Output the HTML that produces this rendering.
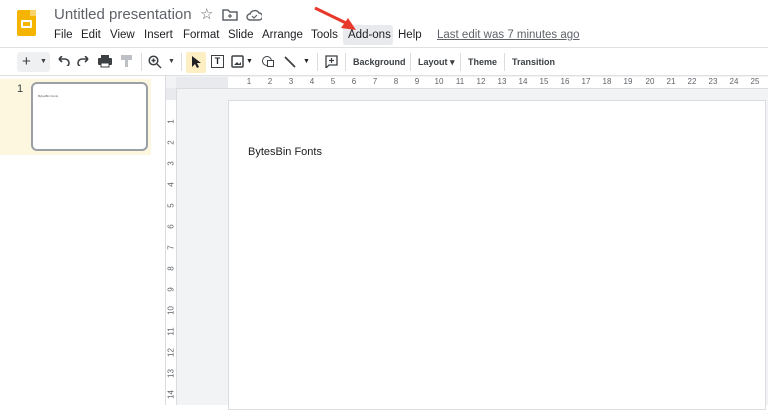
<!DOCTYPE html>
<html><head><style>
*{margin:0;padding:0;box-sizing:border-box}
body{width:768px;height:405px;overflow:hidden;background:#fff;font-family:"Liberation Sans",Arial,sans-serif;position:relative;color:#202124}
.a{position:absolute}
.menu span{position:absolute;top:29px;font-size:11.5px;color:#202124}
.tb{position:absolute;top:57px;font-size:9px;color:#3c4043;font-weight:bold}
.hn{position:absolute;top:77px;font-size:8px;color:#5f6368;width:14px;text-align:center}
.vn{position:absolute;left:166px;font-size:8px;color:#5f6368;width:10px;text-align:center;transform:rotate(-90deg)}
.sep{position:absolute;top:53px;width:1px;height:18px;background:#dadce0}
</style></head><body>
<div class="a" style="left:17px;top:10px;width:19px;height:26px;background:#f4b400;border-radius:2px"></div>
<div class="a" style="left:30px;top:10px;width:6px;height:6px;background:#f9d36a"></div>
<div class="a" style="left:21px;top:20px;width:11px;height:8px;border:2px solid #fff;border-radius:1px"></div>
<div class="a" style="left:54px;top:6px;font-size:15px;color:#5f6368">Untitled presentation</div>
<div class="a" style="left:200px;top:5px;font-size:15px;color:#5f6368">☆</div>
<svg class="a" style="left:222px;top:8px" width="16" height="14"><path d="M1 2h5l2 2h7v8H1z" fill="none" stroke="#5f6368" stroke-width="1.5"/><path d="M8 6v4M6 8h4" stroke="#5f6368" stroke-width="1.3"/></svg>
<svg class="a" style="left:246px;top:9px" width="16" height="12"><path d="M4 11a3 3 0 010-6 5 5 0 019-1 3.5 3.5 0 010 7z" fill="none" stroke="#5f6368" stroke-width="1.4"/><path d="M6 7l2 2 3-3" fill="none" stroke="#5f6368" stroke-width="1.2"/></svg>
<div class="menu">
<span style="left:54px">File</span><span style="left:81px">Edit</span><span style="left:110px">View</span><span style="left:144px">Insert</span><span style="left:183px">Format</span><span style="left:228px">Slide</span><span style="left:262px">Arrange</span><span style="left:311px">Tools</span>
<div class="a" style="left:343px;top:25px;width:50px;height:20px;background:#e8eaed;border-radius:3px"></div>
<span style="left:348px">Add-ons</span><span style="left:398px">Help</span>
<span style="left:437px;color:#5f6368;text-decoration:underline">Last edit was 7 minutes ago</span>
</div>
<svg class="a" style="left:310px;top:4px" width="50" height="30"><path d="M5 4L38 20" stroke="#e8382b" stroke-width="3"/><path d="M46 26L31 24L38 14z" fill="#e8382b"/></svg>
<div class="a" style="left:0;top:47px;width:768px;height:1px;background:#e0e0e0"></div>
<div class="a" style="left:17px;top:52px;width:33px;height:20px;background:#eef0f2;border-radius:3px"></div>
<div class="a" style="left:22px;top:53px;font-size:15px;color:#3c4043">+</div>
<div class="a" style="left:40px;top:58px;font-size:7px;color:#3c4043">▼</div>
<svg class="a" style="left:56px;top:56px" width="14" height="10"><path d="M3 3h6a4 4 0 010 8M3 3l3-3M3 3l3 3" fill="none" stroke="#3c4043" stroke-width="1.6"/></svg>
<svg class="a" style="left:77px;top:56px" width="14" height="10"><path d="M11 3H5a4 4 0 000 8M11 3L8 0M11 3L8 6" fill="none" stroke="#3c4043" stroke-width="1.6"/></svg>
<svg class="a" style="left:98px;top:55px" width="14" height="13"><rect x="3" y="0" width="8" height="3" fill="#3c4043"/><rect x="0" y="3" width="14" height="7" rx="1" fill="#3c4043"/><rect x="3" y="8" width="8" height="4" fill="#fff" stroke="#3c4043"/></svg>
<svg class="a" style="left:121px;top:55px" width="12" height="13"><rect x="0" y="0" width="11" height="5" fill="#bdc1c6"/><rect x="4" y="5" width="3" height="7" fill="#bdc1c6"/></svg>
<div class="sep" style="left:141px"></div>
<svg class="a" style="left:148px;top:55px" width="14" height="14"><circle cx="5.5" cy="5.5" r="4.3" fill="none" stroke="#3c4043" stroke-width="1.5"/><path d="M9 9l4 4M3.5 5.5h4M5.5 3.5v4" stroke="#3c4043" stroke-width="1.4"/></svg>
<div class="a" style="left:168px;top:58px;font-size:7px;color:#3c4043">▼</div>
<div class="sep" style="left:181px"></div>
<div class="a" style="left:186px;top:52px;width:20px;height:21px;background:#feefc3;border-radius:2px"></div>
<svg class="a" style="left:191px;top:55px" width="10" height="14"><path d="M1 1v11l3-3 2 4 2-1-2-4h4z" fill="#202124"/></svg>
<div class="a" style="left:211px;top:55px;width:13px;height:13px;border:1.5px solid #3c4043;font-size:9px;font-weight:bold;text-align:center;line-height:10px">T</div>
<svg class="a" style="left:231px;top:55px" width="13" height="13"><rect x="1" y="1" width="11" height="11" rx="1" fill="none" stroke="#3c4043" stroke-width="1.5"/><path d="M3 10l3-3 2 2 2-2v3z" fill="#3c4043"/></svg>
<div class="a" style="left:246px;top:58px;font-size:7px">▼</div>
<div class="a" style="left:262px;top:56px;width:10px;height:10px;border:1.5px solid #3c4043;border-radius:50%"></div>
<div class="a" style="left:267px;top:60px;width:7px;height:7px;border:1.5px solid #3c4043;background:#fff"></div>
<svg class="a" style="left:284px;top:56px" width="12" height="12"><path d="M1 1l10 10" stroke="#3c4043" stroke-width="1.8"/></svg>
<div class="a" style="left:303px;top:58px;font-size:7px">▼</div>
<div class="sep" style="left:317px"></div>
<svg class="a" style="left:325px;top:55px" width="13" height="13"><path d="M1 1h11v9H4l-3 3z" fill="none" stroke="#3c4043" stroke-width="1.3"/><path d="M6.5 3v5M4 5.5h5" stroke="#3c4043" stroke-width="1.2"/></svg>
<div class="sep" style="left:345px"></div>
<div class="tb" style="left:353px">Background</div>
<div class="sep" style="left:410px"></div>
<div class="tb" style="left:418px">Layout ▾</div>
<div class="sep" style="left:460px"></div>
<div class="tb" style="left:468px">Theme</div>
<div class="sep" style="left:504px"></div>
<div class="tb" style="left:512px">Transition</div>
<div class="a" style="left:0;top:75px;width:768px;height:1px;background:#e0e0e0"></div>
<div class="a" style="left:0;top:79px;width:151px;height:76px;background:#fef7e0"></div>
<div class="a" style="left:17px;top:83px;font-size:11px;color:#3c4043">1</div>
<div class="a" style="left:31px;top:82px;width:117px;height:69px;border:2px solid #9aa0a6;border-radius:6px;background:#fff"></div>
<div class="a" style="left:38px;top:94px;font-size:3px;color:#555">BytesBin Fonts</div>
<div class="a" style="left:165px;top:76px;width:1px;height:329px;background:#dadce0"></div>
<div class="a" style="left:166px;top:76px;width:602px;height:329px;background:#f1f3f4"></div>
<div class="a" style="left:176px;top:77px;width:592px;height:11px;background:#fff"></div>
<div class="a" style="left:176px;top:77px;width:52px;height:11px;background:#e8eaed"></div>
<div class="a" style="left:166px;top:88px;width:10px;height:317px;background:#fff"></div>
<div class="a" style="left:166px;top:88px;width:10px;height:12px;background:#e8eaed"></div>
<div class="a" style="left:176px;top:88px;width:592px;height:1px;background:#dadce0"></div>
<div class="a" style="left:176px;top:88px;width:1px;height:317px;background:#dadce0"></div>
<div class="hn" style="left:242px">1</div><div class="hn" style="left:263px">2</div><div class="hn" style="left:284px">3</div><div class="hn" style="left:305px">4</div><div class="hn" style="left:326px">5</div><div class="hn" style="left:347px">6</div><div class="hn" style="left:368px">7</div><div class="hn" style="left:389px">8</div><div class="hn" style="left:410px">9</div><div class="hn" style="left:432px">10</div><div class="hn" style="left:453px">11</div><div class="hn" style="left:474px">12</div><div class="hn" style="left:495px">13</div><div class="hn" style="left:516px">14</div><div class="hn" style="left:537px">15</div><div class="hn" style="left:558px">16</div><div class="hn" style="left:579px">17</div><div class="hn" style="left:600px">18</div><div class="hn" style="left:621px">19</div><div class="hn" style="left:643px">20</div><div class="hn" style="left:664px">21</div><div class="hn" style="left:685px">22</div><div class="hn" style="left:706px">23</div><div class="hn" style="left:727px">24</div><div class="hn" style="left:748px">25</div>
<div class="vn" style="top:117px">1</div><div class="vn" style="top:138px">2</div><div class="vn" style="top:159px">3</div><div class="vn" style="top:180px">4</div><div class="vn" style="top:201px">5</div><div class="vn" style="top:222px">6</div><div class="vn" style="top:243px">7</div><div class="vn" style="top:264px">8</div><div class="vn" style="top:285px">9</div><div class="vn" style="top:306px">10</div><div class="vn" style="top:327px">11</div><div class="vn" style="top:348px">12</div><div class="vn" style="top:369px">13</div><div class="vn" style="top:390px">14</div>
<div class="a" style="left:228px;top:100px;width:538px;height:310px;background:#fff;border:1px solid #dadce0"></div>
<div class="a" style="left:248px;top:146px;font-size:11px;color:#202124">BytesBin Fonts</div>
</body></html>
